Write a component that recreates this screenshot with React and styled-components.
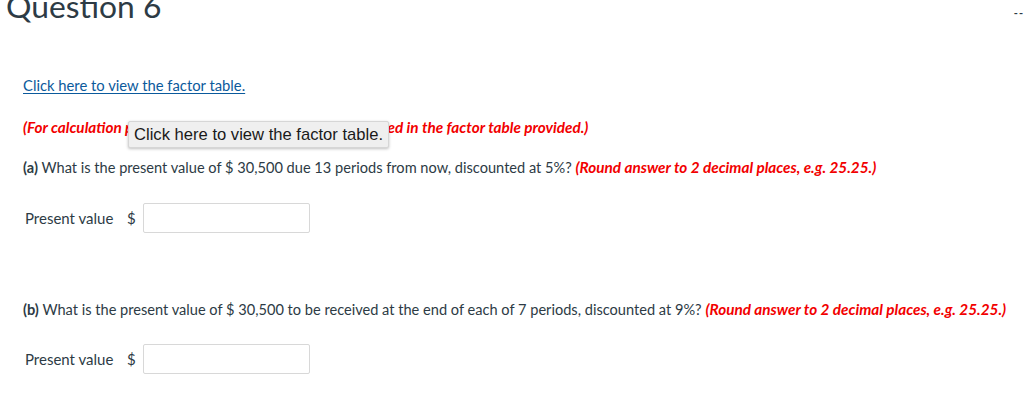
import React from "react";
import styled, { createGlobalStyle } from "styled-components";

const Global = createGlobalStyle`
  html, body { margin: 0; padding: 0; background: #fff; }
  body { font-family: Lato, "Open Sans", sans-serif; color: #2d3b45; }
`;

const Page = styled.div`
  width: 1024px;
  height: 402px;
  overflow: hidden;
  position: relative;
`;

const Header = styled.div`
  display: flex;
  justify-content: space-between;
  align-items: flex-start;
  height: 24px;
  margin-top: -14px;
  padding-left: 6px;
`;

const Title = styled.h2`
  margin: 0;
  font-family: Lato, sans-serif;
  font-weight: 400;
  font-size: 31.8px;
  line-height: 40px;
  color: #2d3b45;
`;

const Points = styled.span`
  font-size: 11px;
  line-height: 11px;
  margin-top: 21px;
  margin-right: 0;
  color: #2d3b45;
  letter-spacing: 1px;
  font-weight: 700;
`;

const Body = styled.div`
  padding: 65px 0 0 23px;
  font-size: 14.6px;
  line-height: 20px;
`;

const Link = styled.a`
  display: inline-block;
  color: #0b5a9c;
  font-size: 14.8px;
  text-decoration: underline;
  text-underline-offset: 2px;
  line-height: 20px;
`;

const Note = styled.p`
  position: relative;
  margin: ${p => p.$mt || 0}px 0 0;
  height: 20px;
  line-height: 20px;
  color: #2d3b45;
`;

const Red = styled.strong`
  color: #f20000;
  font-style: italic;
  font-weight: 700;
  font-size: 15.3px;
  line-height: 1;
`;

const Part = styled.strong`
  font-weight: 700;
`;

const Tooltip = styled.div`
  position: absolute;
  left: 105px;
  top: 3px;
  height: 25px;
  padding: 0 5px;
  background: #efefef;
  border: 1px solid #d6d6d6;
  border-radius: 2px;
  box-shadow: 0 1px 3px rgba(0, 0, 0, 0.25);
  font-family: "Liberation Sans", Arial, sans-serif;
  font-size: 16.6px;
  line-height: 25px;
  color: #1a1a1a;
  white-space: nowrap;
`;

const AnswerRow = styled.div`
  display: flex;
  align-items: center;
  height: 30px;
  margin-top: ${p => p.$mt}px;
  padding-left: 2px;
`;

const Label = styled.span`
  width: 102px;
  font-size: 15px;
  color: #2d3b45;
`;

const Dollar = styled.span`
  width: 16px;
  font-size: 15px;
  color: #2d3b45;
`;

const Input = styled.input`
  box-sizing: border-box;
  width: 167px;
  height: 30px;
  margin: 0;
  border: 1px solid #d8d8d8;
  border-radius: 2px;
  background: #fff;
  outline: none;
`;

export default function App() {
  return (
    <Page>
      <Global />
      <Header>
        <Title>Question 6</Title>
        <Points>--</Points>
      </Header>
      <Body>
        <Link href="#">Click here to view the factor table.</Link>
        <Note $mt={22}>
          <Red>
            (For calculation purposes, use 5 decimal places as displayed in the
            factor table provided.)
          </Red>
          <Tooltip>Click here to view the factor table.</Tooltip>
        </Note>
        <Note $mt={20}>
          <Part>(a)</Part> What is the present value of $ 30,500 due 13 periods
          from now, discounted at 5%?{" "}
          <Red>(Round answer to 2 decimal places, e.g. 25.25.)</Red>
        </Note>
        <AnswerRow $mt={25}>
          <Label>Present value</Label>
          <Dollar>$</Dollar>
          <Input type="text" />
        </AnswerRow>
        <Note $mt={67}>
          <Part>(b)</Part> What is the present value of $ 30,500 to be received
          at the end of each of 7 periods, discounted at 9%?{" "}
          <Red>(Round answer to 2 decimal places, e.g. 25.25.)</Red>
        </Note>
        <AnswerRow $mt={24}>
          <Label>Present value</Label>
          <Dollar>$</Dollar>
          <Input type="text" />
        </AnswerRow>
      </Body>
    </Page>
  );
}
